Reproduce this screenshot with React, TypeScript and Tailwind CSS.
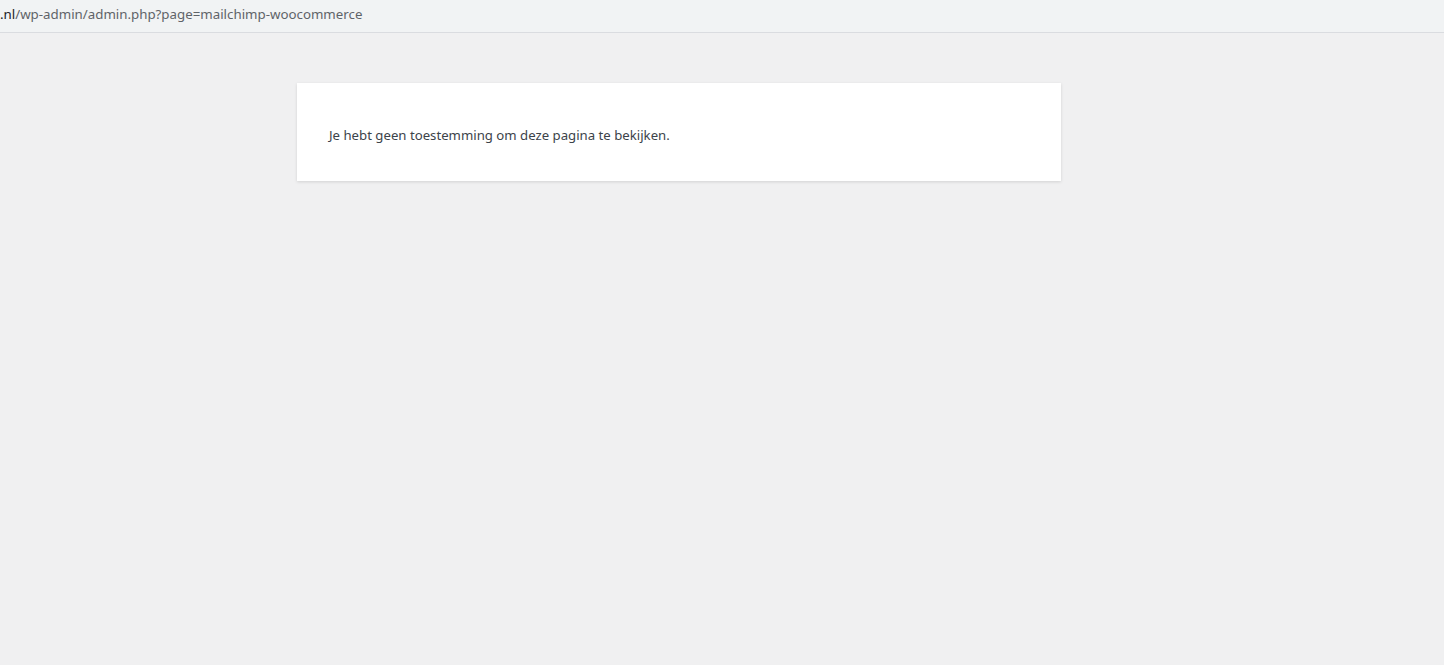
import React from 'react';

const App: React.FC = () => {
  return (
    <div className="w-[1444px] h-[665px] bg-[#f0f0f1] flex flex-col overflow-hidden" style={{ fontFamily: '"Noto Sans", "Open Sans", sans-serif' }}>
      {/* Address bar */}
      <div className="h-[33px] bg-[#f1f3f4] border-b border-[#dadce0] flex items-start pt-[5px] shrink-0">
        <span className="text-[13.3px] leading-[18px] text-[#202124]">.nl</span>
        <span className="text-[13.3px] leading-[18px] text-[#5f6368]">/wp-admin/admin.php?page=mailchimp-woocommerce</span>
      </div>

      {/* Error card */}
      <div className="ml-[297px] mt-[50px] w-[764px] h-[98px] bg-white shadow-[0_1px_3px_rgba(0,0,0,0.13)] flex items-center px-8">
        <p className="text-[13.2px] leading-[20px] text-[#3c434a] pt-[6px]">
          Je hebt geen toestemming om deze pagina te bekijken.
        </p>
      </div>
    </div>
  );
};

export default App;
